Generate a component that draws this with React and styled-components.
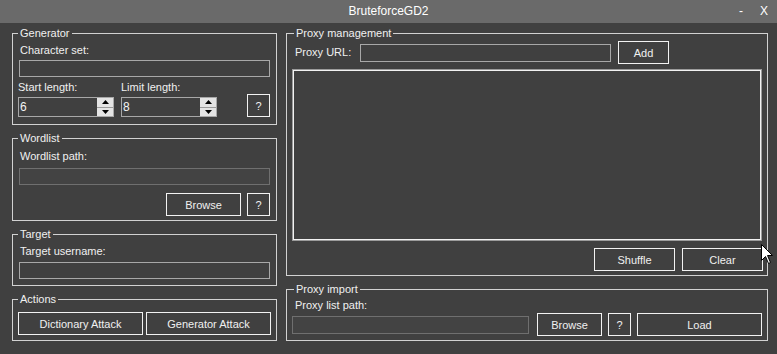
import React from "react";
import styled, { createGlobalStyle } from "styled-components";

const GlobalStyle = createGlobalStyle`
  html, body {
    margin: 0;
    background: #404040;
  }
  body {
    font-family: "Liberation Sans", Arial, sans-serif;
    font-size: 11px;
    color: #f0f0f0;
  }
`;

const Window = styled.div`
  width: 777px;
  height: 354px;
  background: #404040;
  display: flex;
  flex-direction: column;
  position: relative;
  overflow: hidden;
`;

const TitleBar = styled.div`
  height: 23px;
  background: #6a6a6a;
  display: grid;
  grid-template-columns: 1fr auto 1fr;
  align-items: center;
  font-size: 12px;
  color: #ffffff;
`;

const Title = styled.div`
  grid-column: 2;
  line-height: 23px;
`;

const WinControls = styled.div`
  justify-self: end;
  display: flex;
  align-items: center;
  gap: 17px;
  padding-right: 9px;
  line-height: 23px;
`;

const Body = styled.div`
  display: flex;
  gap: 9px;
  padding: 4px 0 0 12px;
`;

const Column = styled.div`
  width: ${(p) => p.$width}px;
  display: flex;
  flex-direction: column;
  gap: 7px;
`;

const Group = styled.fieldset`
  margin: 0;
  min-width: 0;
  border: 1px solid #d2d2d2;
  padding: 0 6px ${(p) => p.$pb || 6}px 6px;
  display: flex;
  flex-direction: column;
`;

const Legend = styled.legend`
  padding: 0 2px;
  margin-left: ${(p) => (p.$ml || 0) - 1}px;
  line-height: 13px;
  font-size: 11px;
`;

const Label = styled.div`
  line-height: 13px;
  margin-top: ${(p) => p.$mt || 0}px;
  margin-left: ${(p) => p.$ml ?? 1}px;
  white-space: nowrap;
`;

const UrlLabel = styled(Label)`
  width: 65px;
`;

const TextBox = styled.div`
  height: ${(p) => p.$h || 17}px;
  box-sizing: border-box;
  margin-top: ${(p) => p.$mt || 0}px;
  border: 1px solid ${(p) => (p.$dim ? "#6f6f6f" : "#a8a8a8")};
  background: ${(p) => (p.$dim ? "#434343" : "#404040")};
  width: ${(p) => (p.$w ? `${p.$w}px` : "auto")};
  flex: ${(p) => (p.$w ? "none" : "initial")};
  margin-right: ${(p) => p.$mr || 0}px;
`;

const Button = styled.div`
  box-sizing: border-box;
  height: 23px;
  width: ${(p) => p.$w}px;
  flex: none;
  margin-left: ${(p) => p.$ml || 0}px;
  border: 1px solid #f2f2f2;
  display: flex;
  align-items: center;
  justify-content: center;
  color: #f0f0f0;
  font-size: 11px;
`;

const HelpButton = styled(Button)`
  margin-left: auto;
`;

const Row = styled.div`
  display: flex;
  align-items: ${(p) => p.$align || "center"};
  justify-content: ${(p) => p.$justify || "flex-start"};
  gap: ${(p) => p.$gap || 0}px;
  margin-top: ${(p) => p.$mt || 0}px;
  margin-left: ${(p) => p.$ml || 0}px;
  margin-right: ${(p) => p.$mr || 0}px;
`;

const NumField = styled.div`
  display: flex;
  flex-direction: column;
  width: 96px;
`;

const Numeric = styled.div`
  margin-top: 3px;
  height: 20px;
  box-sizing: border-box;
  border: 1px solid #a8a8a8;
  display: flex;
  align-items: center;
  padding-left: 1px;
  font-size: 12px;
  color: #f4f4f4;
`;

const NumValue = styled.span`
  flex: 1;
`;

const Spin = styled.div`
  width: 16px;
  height: 18px;
  display: flex;
  flex-direction: column;
  gap: 1px;
  background: #9a9a9a;
`;

const SpinBtn = styled.div`
  flex: 1;
  background: #e4e4e4;
  display: flex;
  align-items: center;
  justify-content: center;
`;

const ListBox = styled.div`
  margin-top: 5px;
  margin-left: -1px;
  width: 470px;
  height: 172px;
  box-sizing: border-box;
  border: 1px solid #9c9c9c;
  box-shadow: inset 0 0 0 1px #f2f2f2;
  background: #404040;
`;

const Cursor = styled.svg`
  position: absolute;
  left: 761px;
  top: 244px;
`;

const Tri = ({ up }) => (
  <svg width="7" height="4" viewBox="0 0 7 4">
    <path d={up ? "M0 4 L3.5 0 L7 4 Z" : "M0 0 L3.5 4 L7 0 Z"} fill="#000" />
  </svg>
);

const NumericUpDown = ({ label, value }) => (
  <NumField>
    <Label $ml={0}>{label}</Label>
    <Numeric>
      <NumValue>{value}</NumValue>
      <Spin>
        <SpinBtn>
          <Tri up />
        </SpinBtn>
        <SpinBtn>
          <Tri />
        </SpinBtn>
      </Spin>
    </Numeric>
  </NumField>
);

export default function App() {
  return (
    <>
      <GlobalStyle />
      <Window>
        <TitleBar>
          <Title>BruteforceGD2</Title>
          <WinControls>
            <span>-</span>
            <span>X</span>
          </WinControls>
        </TitleBar>
        <Body>
          <Column $width={265}>
            <Group $pb={7}>
              <Legend>Generator</Legend>
              <Label $mt={4}>Character set:</Label>
              <TextBox $mt={3} />
              <Row $align="flex-end" $gap={7} $mt={4} $ml={-1}>
                <NumericUpDown label="Start length:" value="6" />
                <NumericUpDown label="Limit length:" value="8" />
                <HelpButton $w={23}>?</HelpButton>
              </Row>
            </Group>

            <Group $pb={4}>
              <Legend>Wordlist</Legend>
              <Label $mt={5}>Wordlist path:</Label>
              <TextBox $mt={5} $dim />
              <Row $justify="flex-end" $gap={6} $mt={8}>
                <Button $w={75}>Browse</Button>
                <Button $w={23}>?</Button>
              </Row>
            </Group>

            <Group $pb={6}>
              <Legend>Target</Legend>
              <Label $mt={4}>Target username:</Label>
              <TextBox $mt={4} />
            </Group>

            <Group $pb={5}>
              <Legend>Actions</Legend>
              <Row $gap={3} $mt={6} $ml={-1}>
                <Button $w={125}>Dictionary Attack</Button>
                <Button $w={125}>Generator Attack</Button>
              </Row>
            </Group>
          </Column>

          <Column $width={482}>
            <Group $pb={4}>
              <Legend $ml={2}>Proxy management</Legend>
              <Row $mt={1}>
                <UrlLabel $ml={2}>Proxy URL:</UrlLabel>
                <TextBox $w={251} $h={18} $mr={7} />
                <Button $w={51}>Add</Button>
              </Row>
              <ListBox />
              <Row $justify="flex-end" $gap={7} $mt={7} $mr={-2}>
                <Button $w={81}>Shuffle</Button>
                <Button $w={81}>Clear</Button>
              </Row>
            </Group>

            <Group $pb={4}>
              <Legend $ml={2}>Proxy import</Legend>
              <Label $mt={3} $ml={2}>
                Proxy list path:
              </Label>
              <Row $mt={1} $ml={-1}>
                <TextBox $w={237} $h={18} $dim />
                <Button $w={65} $ml={8}>Browse</Button>
                <Button $w={23} $ml={6}>?</Button>
                <Button $w={125} $ml={6}>Load</Button>
              </Row>
            </Group>
          </Column>
        </Body>
        <Cursor width="13" height="21" viewBox="0 0 13 21">
          <path
            d="M0.5 0.5 L0.5 16.5 L4.5 12.5 L7.5 19.5 L9.5 18.5 L6.5 11.5 L11.5 11.5 Z"
            fill="#fff"
            stroke="#000"
            strokeWidth="1"
          />
        </Cursor>
      </Window>
    </>
  );
}
